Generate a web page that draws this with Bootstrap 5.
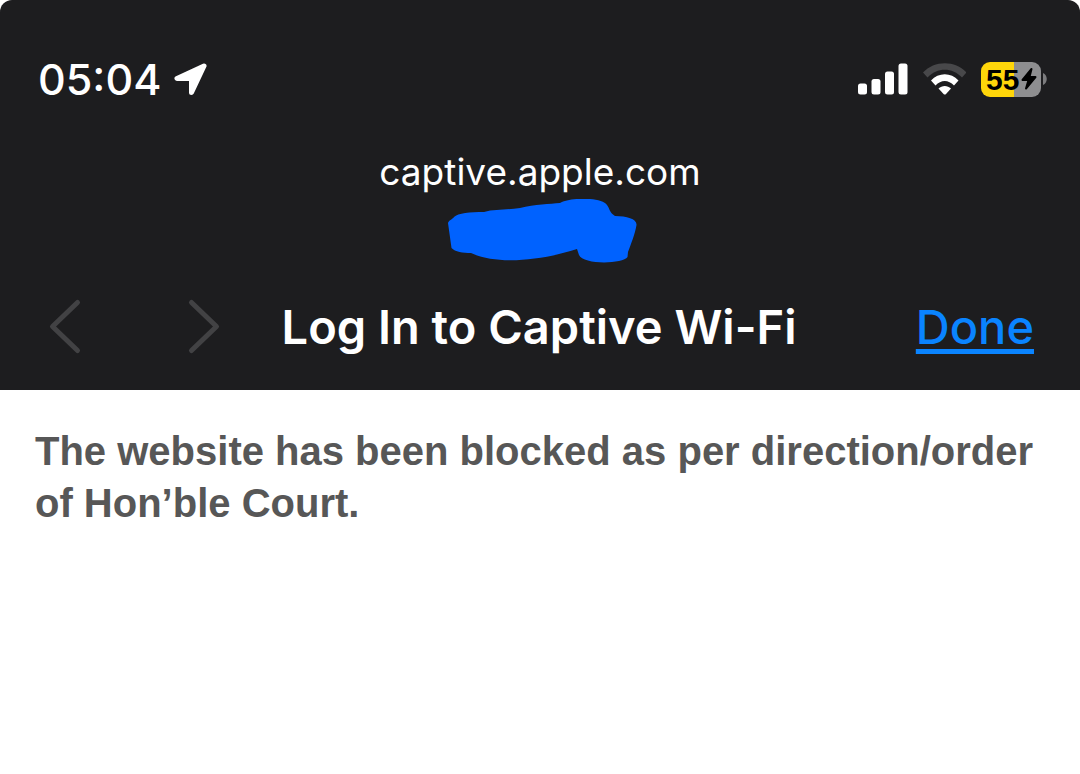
<!DOCTYPE html>
<html lang="en">
<head>
<meta charset="utf-8">
<meta name="viewport" content="width=device-width, initial-scale=1">
<title>Log In to Captive Wi-Fi</title>
<link href="https://cdn.jsdelivr.net/npm/bootstrap@5.3.0/dist/css/bootstrap.min.css" rel="stylesheet">
<style>
  body { background: #fff; font-family: Inter, "Liberation Sans", sans-serif; }
  .sheet-header { background: #1d1d1f; border-radius: 12px 12px 0 0; padding-bottom: 33px; }
  .status-bar { padding: 54px 33px 0 38px; }
  .clock { font-size: 43px; line-height: 50px; font-weight: 500; }
  .status-icons { gap: 15px; }
  .battery-group { gap: 2px; }
  .battery { width: 60px; height: 35px; border-radius: 9px; color: #000; font-family: "Liberation Sans", Arial, sans-serif; font-size: 30px; line-height: 35px; font-weight: 700;
    background: linear-gradient(90deg, #ffd60a 55%, #8e8e90 55%); padding: 0 4px 0 5px; }
  .host { font-size: 37px; line-height: 46px; padding-top: 45px; }
  .redaction { padding-left: 4px; }
  .toolbar { display: grid; grid-template-columns: 1fr auto 1fr; padding: 32px 46px 0 44px; }
  .page-title { font-size: 47px; line-height: 60px; font-weight: 600; }
  .arrow-btn { width: 44px; height: 60px; }
  .arrow-gap { gap: 94px; }
  .done { font-size: 47px; line-height: 60px; font-weight: 500; color: #0a84ff; text-decoration-thickness: 5px; text-underline-offset: 5px; }
  .notice { padding: 35px 35px; font-family: "Liberation Sans", Arial, sans-serif; font-size: 40px; line-height: 52px; font-weight: 700; color: #575757; }
</style>
</head>
<body>
<header class="sheet-header text-white">
  <div class="status-bar d-flex justify-content-between align-items-center">
    <div class="d-flex align-items-center gap-2">
      <time class="clock">05:04</time>
      <svg width="38" height="36" viewBox="0 0 38 36" fill="#fff" stroke="#fff" stroke-width="5" stroke-linejoin="round" aria-hidden="true"><path d="M35 5 8 17.500H22.500V31.500Z"/></svg>
    </div>
    <div class="status-icons d-flex align-items-center">
      <svg width="50" height="32" viewBox="0 0 50 32" fill="#fff" role="img" aria-label="Cellular signal"><rect y="20.500" width="9" height="11" rx="2.500"/><rect x="13.500" y="16" width="9" height="15.500" rx="2.500"/><rect x="27" y="8.500" width="9" height="23" rx="2.500"/><rect x="40.500" y=".5" width="9" height="31" rx="2.500"/></svg>
      <svg width="43" height="32" viewBox="0 0 43 32" role="img" aria-label="Wi-Fi signal"><path d="M0 9.500C11-3 33-3 43.500 9.500L39 14.500C29.500 4 14 4 4.500 14.500Z" fill="#48484a"/><path d="M8 17.500C15.500 9 28 9 35.500 17.500L31 22.500C25.500 16.500 18 16.500 12.500 22.500Z" fill="#fff"/><path d="M15.500 25.500C19 22 24.500 22 28 25.500L22.800 31.200Q21.800 32 20.800 31.200Z" fill="#fff"/></svg>
      <div class="battery-group d-flex align-items-center">
        <div class="battery d-flex align-items-center justify-content-between" role="img" aria-label="Battery 55 percent, charging">
          <span>55</span>
          <svg width="16" height="24" viewBox="0 0 16 24" aria-hidden="true"><path d="M10.500 2 1.500 13H7.500L5 21.500 14.500 10H8.500Z" stroke="#000" stroke-width="2" stroke-linejoin="round"/></svg>
        </div>
        <svg width="4" height="12" viewBox="0 0 4 12" aria-hidden="true"><path d="M0 0C5 2 5 10 0 12Z" fill="#7c7c7e"/></svg>
      </div>
    </div>
  </div>
  <div class="text-center">
    <div class="host">captive.apple.com</div>
    <div class="redaction pt-1"><svg width="190" height="66" viewBox="447 199 190 66" class="d-block mx-auto" aria-hidden="true"><path d="M448 223C449 220 453 219 454 217C458 213 470 212 484 212C495 209 507 210 520 208C535 204 550 204 560 203C570 197 602 197 607 205C610 209 609 212 615 216C627 216 637 219 636.500 225C635 234 631 244 628 252L627.500 257C623 264 583 265 579 255L577 249C540 261 496 265 471 253C463 253 455 252 451.500 248Z" fill="#0062ff"/></svg></div>
  </div>
  <div class="toolbar align-items-center">
    <div class="arrow-gap d-flex">
      <button class="arrow-btn btn p-0 border-0 d-flex" type="button" aria-label="Back"><svg width="44" height="60" viewBox="0 0 44 60" fill="none" stroke="#424244" stroke-width="5" stroke-linecap="round" stroke-linejoin="round"><path d="M33.500 5.500 8.500 29.500 33.500 53.500"/></svg></button>
      <button class="arrow-btn btn p-0 border-0 d-flex" type="button" aria-label="Forward"><svg width="44" height="60" viewBox="0 0 44 60" fill="none" stroke="#424244" stroke-width="5" stroke-linecap="round" stroke-linejoin="round"><path d="M9.500 5.500 34.500 29.500 9.500 53.500"/></svg></button>
    </div>
    <h1 class="page-title m-0">Log In to Captive Wi-Fi</h1>
    <a class="done text-end" href="#">Done</a>
  </div>
</header>
<main class="notice"><p class="m-0">The website has been blocked as per direction/order of Hon’ble Court.</p></main>
<script src="https://cdn.jsdelivr.net/npm/bootstrap@5.3.0/dist/js/bootstrap.bundle.min.js"></script>
</body>
</html>
